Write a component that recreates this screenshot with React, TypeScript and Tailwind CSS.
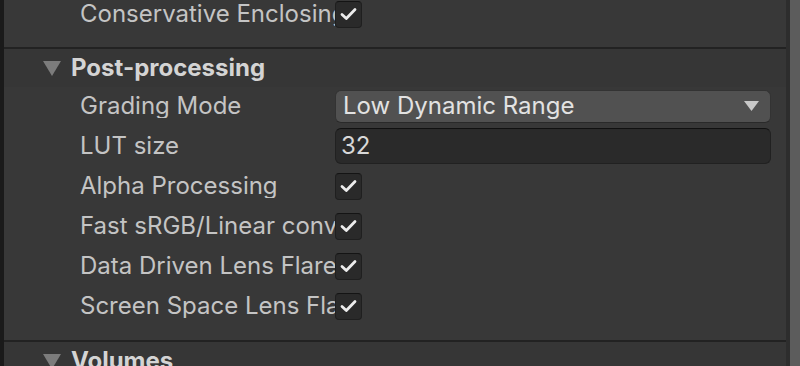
import { ReactNode } from "react"

const font = { fontFamily: "Inter, 'Noto Sans', sans-serif" }

function Check() {
  return (
    <div className="w-[27px] h-[27px] shrink-0 rounded-[4px] bg-[#2a2a2a] border border-[#1f1f1f] border-t-[#141414] flex items-center justify-center">
      <svg width="17" height="14" viewBox="0 0 17 14">
        <path d="M2 7.5 L6.3 11.5 L15 2.5" fill="none" stroke="#ececec" strokeWidth="2.8" strokeLinecap="round" strokeLinejoin="round" />
      </svg>
    </div>
  )
}

function Row({ label, children }: { label: string; children: ReactNode }) {
  return (
    <div className="h-[40px] shrink-0 flex items-center pl-[76px] pr-[15px]">
      <div className="w-[255px] shrink-0 overflow-hidden whitespace-nowrap text-[24px] text-[#c4c4c4] leading-none">
        {label}
      </div>
      <div className="flex-1 flex items-center">{children}</div>
    </div>
  )
}

function Foldout({ title }: { title: string }) {
  return (
    <div className="h-[38px] shrink-0 flex items-center bg-[#363636] pl-[39px]">
      <svg width="18" height="15" viewBox="0 0 18 15" className="shrink-0">
        <path d="M0 0 H18 L9 15 Z" fill="#7c7c7c" />
      </svg>
      <span className="ml-[10px] text-[24px] font-bold text-[#d4d4d4] leading-none">{title}</span>
    </div>
  )
}

export default function App() {
  return (
    <div className="w-[800px] h-[366px] overflow-hidden flex bg-[#383838]" style={font}>
      <div className="w-[4px] shrink-0 bg-[#1a1a1a]" />

      <div className="flex-1 flex flex-col overflow-hidden">
        <div className="-mt-[6px]">
          <Row label="Conservative Enclosing">
            <Check />
          </Row>
        </div>
        <div className="h-[13px] shrink-0" />
        <div className="h-[2px] shrink-0 bg-[#222222]" />

        <Foldout title="Post-processing" />

        <div className="-mt-[1px]">
          <Row label="Grading Mode">
            <div className="flex-1 h-[33px] rounded-[6px] bg-[#515151] border border-[#333333] border-b-[#2a2a2a] flex items-center pl-[7px] pr-[11px]">
              <span className="flex-1 text-[24px] text-[#e2e2e2] leading-none">Low Dynamic Range</span>
              <svg width="15" height="10" viewBox="0 0 15 10">
                <path d="M0 0 H15 L7.5 10 Z" fill="#c8c8c8" />
              </svg>
            </div>
          </Row>
        </div>
        <Row label="LUT size">
          <div className="flex-1 h-[36px] rounded-[6px] bg-[#2a2a2a] border border-[#212121] border-t-[#111111] flex items-center pl-[5px]">
            <span className="text-[24px] text-[#d8d8d8] leading-none">32</span>
          </div>
        </Row>
        <Row label="Alpha Processing">
          <Check />
        </Row>
        <Row label="Fast sRGB/Linear conversion">
          <Check />
        </Row>
        <Row label="Data Driven Lens Flare">
          <Check />
        </Row>
        <Row label="Screen Space Lens Flare">
          <Check />
        </Row>

        <div className="h-[14px] shrink-0" />
        <div className="h-[2px] shrink-0 bg-[#222222]" />
        <Foldout title="Volumes" />
      </div>

      <div className="w-[4px] shrink-0 bg-[#2d2d2d]" />
      <div className="w-[10px] shrink-0 bg-[#5c5c5c]" />
    </div>
  )
}
